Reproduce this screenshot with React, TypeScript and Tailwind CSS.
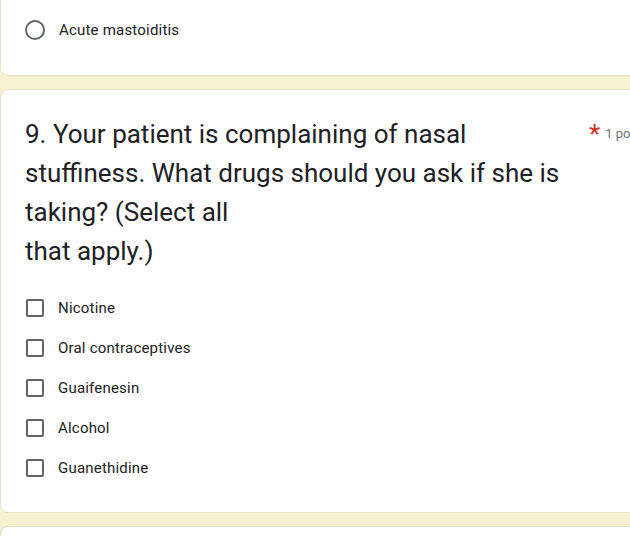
import React from 'react';

const options = ['Nicotine', 'Oral contraceptives', 'Guaifenesin', 'Alcohol', 'Guanethidine'];

const Checkbox = () => (
  <div className="w-[18px] h-[18px] rounded-[2px] border-2 border-[#5f6368] shrink-0 ml-px" />
);

const Radio = () => (
  <div className="w-5 h-5 rounded-full border-2 border-[#5f6368] shrink-0" />
);

export default function App() {
  return (
    <div
      className="w-[630px] h-[536px] overflow-hidden bg-[#f7f2d1] flex flex-col gap-[13px]"
      style={{ fontFamily: 'Roboto, "Liberation Sans", sans-serif' }}
    >
      {/* Previous question (cut off) */}
      <div className="w-[680px] bg-white rounded-b-lg border border-t-0 border-[#e6e2c4] pl-6 pt-[10px] pb-[25px]">
        <div className="h-10 flex items-center gap-[14px]">
          <Radio />
          <span className="text-[15px] text-[#202124] tracking-[0.2px]">Acute mastoiditis</span>
        </div>
      </div>

      {/* Question 9 */}
      <div className="w-[680px] bg-white rounded-lg border border-[#e6e2c4] pl-6 pt-[25px] pb-6">
        <div className="flex items-start">
          <div className="w-[556px] text-[26px] leading-[39px] text-[#202124] whitespace-nowrap">
            9. Your patient is complaining of nasal
            <br />
            stuffiness. What drugs should you ask if she is
            <br />
            taking? (Select all
            <br />
            that apply.)
          </div>
          <div className="flex items-start gap-[5px] pl-[8px] pt-[6px]">
            <span className="text-[26px] leading-[26px] text-[#d93025]">*</span>
            <span className="text-[13px] leading-[26px] text-[#70757a] whitespace-nowrap">1 point</span>
          </div>
        </div>
        <div className="mt-[17px] flex flex-col">
          {options.map((o) => (
            <div key={o} className="h-10 flex items-center gap-[14px]">
              <Checkbox />
              <span className="text-[15px] text-[#202124] tracking-[0.2px]">{o}</span>
            </div>
          ))}
        </div>
      </div>

      {/* Next card (cut off) */}
      <div className="w-[680px] h-10 bg-white rounded-t-lg border border-b-0 border-[#e6e2c4] shrink-0" />
    </div>
  );
}
